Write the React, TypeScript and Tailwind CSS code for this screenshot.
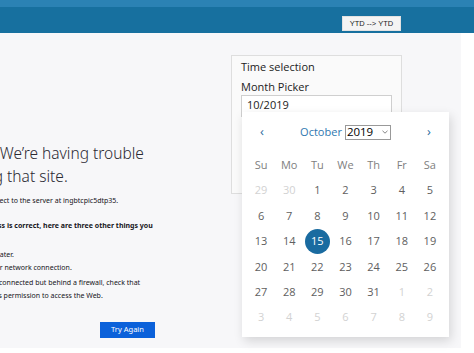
const days = ["Su", "Mo", "Tu", "We", "Th", "Fr", "Sa"];

type Day = { n: number; muted?: boolean };

const weeks: Day[][] = [
  [{ n: 29, muted: true }, { n: 30, muted: true }, { n: 1 }, { n: 2 }, { n: 3 }, { n: 4 }, { n: 5 }],
  [{ n: 6 }, { n: 7 }, { n: 8 }, { n: 9 }, { n: 10 }, { n: 11 }, { n: 12 }],
  [{ n: 13 }, { n: 14 }, { n: 15 }, { n: 16 }, { n: 17 }, { n: 18 }, { n: 19 }],
  [{ n: 20 }, { n: 21 }, { n: 22 }, { n: 23 }, { n: 24 }, { n: 25 }, { n: 26 }],
  [{ n: 27 }, { n: 28 }, { n: 29 }, { n: 30 }, { n: 31 }, { n: 1, muted: true }, { n: 2, muted: true }],
  [3, 4, 5, 6, 7, 8, 9].map((n) => ({ n, muted: true })),
];

const TopBar = () => (
  <div className="flex flex-col h-[33px]">
    <div className="h-[7px] bg-[#2b82b4]" />
    <div className="flex-1 flex justify-end items-start pt-[9px] pr-[73px] bg-[#17709f]">
      <button className="w-[59px] h-[15px] bg-[#f4f4f4] border border-[#e2e2e2] text-[7.5px] leading-none text-[#222] font-['Liberation_Sans',sans-serif]">
        YTD --&gt; YTD
      </button>
    </div>
  </div>
);

const ErrorPage = () => (
  <div className="w-[231px] shrink-0 overflow-hidden font-['Noto_Sans',sans-serif] text-[#15141a]">
    <div className="-ml-[46px] w-[300px] pt-[109px] whitespace-nowrap">
      <h1 className="text-[15.5px] leading-[23px] font-light text-[#2b2a33]">
        <span className="block -ml-[1px]">Hmm. We’re having trouble</span>
        <span className="block">finding that site.</span>
      </h1>
      <p className="mt-[6px] text-[7px] leading-[13px]">
        We can’t connect to the server at ingbtcpic5dtp35.
      </p>
      <p className="mt-[12px] text-[7px] leading-[13px] font-bold">
        <span className="block">If that address is correct, here are three other things you</span>
        <span className="block">can try:</span>
      </p>
      <ul className="mt-[3px] pl-[12px] text-[7px] leading-[13px]">
        <li>Try again later.</li>
        <li>Check your network connection.</li>
        <li className="mt-[2px]">
          <span className="block">If you are connected but behind a firewall, check that</span>
          <span className="block">Firefox has permission to access the Web.</span>
        </li>
      </ul>
      <button className="mt-[20px] ml-[146px] w-[55px] h-[16px] bg-[#0b61da] text-white text-[7.5px] leading-none">
        Try Again
      </button>
    </div>
  </div>
);

const Calendar = () => (
  <div className="absolute left-[10px] top-[56px] w-[207px] h-[225px] bg-white shadow-[2px_4px_10px_rgba(0,0,0,0.14)] font-['Open_Sans',sans-serif]">
    <div className="flex items-center justify-between h-[40px] px-[18px] text-[#2f6e9e]">
      <span className="text-[13px]">‹</span>
      <div className="flex items-center gap-[3px]">
        <span className="text-[11px] text-[#2f78b0]">October</span>
        <div className="flex items-center justify-between w-[46px] h-[15px] border border-[#999] px-[1px] text-[11.5px] text-black">
          <span className="leading-none">2019</span>
          <svg width="6" height="4" viewBox="0 0 6 4" className="mr-[1px]">
            <path d="M0.5 0.8 L3 3.2 L5.5 0.8" fill="none" stroke="#666" strokeWidth="0.8" />
          </svg>
        </div>
      </div>
      <span className="text-[13px]">›</span>
    </div>
    <div className="px-[5px]">
      <div className="grid grid-cols-7 h-[26px] items-center text-center text-[11px] text-[#808080]">
        {days.map((d) => (
          <span key={d}>{d}</span>
        ))}
      </div>
      {weeks.map((week, i) => (
        <div key={i} className="grid grid-cols-7 h-[25.4px] items-center text-[11px]">
          {week.map((day, j) => (
            <div key={j} className="flex justify-center">
              {!day.muted && day.n === 15 ? (
                <span className="w-[25px] h-[25px] rounded-full bg-[#1a6ba0] text-white flex items-center justify-center">
                  {day.n}
                </span>
              ) : (
                <span className={day.muted ? "text-[#d2d2d2]" : "text-[#606060]"}>{day.n}</span>
              )}
            </div>
          ))}
        </div>
      ))}
    </div>
  </div>
);

const TimeSelection = () => (
  <div className="relative mt-[22px] w-[171px] h-[139px] border border-[#dedede] bg-[#fafafa] pl-[9px] pr-[9px] pt-[3px] font-['Open_Sans',sans-serif] text-[#222]">
    <div className="text-[11px] leading-[16px]">Time selection</div>
    <div className="mt-[4px] text-[11px] leading-[16px]">Month Picker</div>
    <div className="h-[22px] border border-[#cfcfcf] bg-white pl-[5px] text-[11px] leading-[18px]">
      10/2019
    </div>
    <Calendar />
  </div>
);

export default function App() {
  return (
    <div className="w-[474px] h-[353px] bg-white overflow-hidden">
      <TopBar />
      <div className="flex w-[461px] h-[315px] bg-[#f7f7f9]">
        <ErrorPage />
        <TimeSelection />
      </div>
    </div>
  );
}
